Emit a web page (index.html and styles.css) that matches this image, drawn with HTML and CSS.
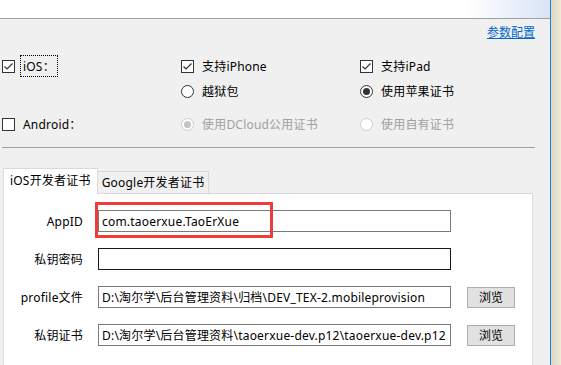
FILE: index.html
```html
<!DOCTYPE html>
<html lang="zh-CN">
<head>
    <meta charset="UTF-8">
    <title>证书配置</title>
    <link rel="stylesheet" href="styles.css">
</head>
<body>

    <div class="screen">
        <div class="window">
            <div class="titlebar"></div>

            <div class="content">
                <div class="link-row">
                    <a class="link" href="#">参数配置</a>
                </div>

                <div class="options">
                    <label class="opt">
                        <svg class="box" viewBox="0 0 13 13"><rect x="0.5" y="0.5" width="12" height="12" fill="#fff" stroke="#333"/><polyline points="2.5,6.5 5,9 10.5,3.5" fill="none" stroke="#333" stroke-width="1.2"/></svg>
                        <span class="focus">iOS：</span>
                    </label>
                    <label class="opt">
                        <svg class="box" viewBox="0 0 13 13"><rect x="0.5" y="0.5" width="12" height="12" fill="#fff" stroke="#333"/><polyline points="2.5,6.5 5,9 10.5,3.5" fill="none" stroke="#333" stroke-width="1.2"/></svg>
                        <span>支持iPhone</span>
                    </label>
                    <label class="opt">
                        <svg class="box" viewBox="0 0 13 13"><rect x="0.5" y="0.5" width="12" height="12" fill="#fff" stroke="#333"/><polyline points="2.5,6.5 5,9 10.5,3.5" fill="none" stroke="#333" stroke-width="1.2"/></svg>
                        <span>支持iPad</span>
                    </label>

                    <span></span>
                    <label class="opt">
                        <svg class="box" viewBox="0 0 13 13"><circle cx="6.5" cy="6.5" r="6" fill="#fff" stroke="#333"/></svg>
                        <span>越狱包</span>
                    </label>
                    <label class="opt">
                        <svg class="box" viewBox="0 0 13 13"><circle cx="6.5" cy="6.5" r="6" fill="#fff" stroke="#333"/><circle cx="6.5" cy="6.5" r="3.5" fill="#333"/></svg>
                        <span>使用苹果证书</span>
                    </label>

                    <label class="opt">
                        <svg class="box" viewBox="0 0 13 13"><rect x="0.5" y="0.5" width="12" height="12" fill="#fff" stroke="#333"/></svg>
                        <span>Android：</span>
                    </label>
                    <label class="opt disabled">
                        <svg class="box" viewBox="0 0 13 13"><circle cx="6.5" cy="6.5" r="6" fill="#fff" stroke="#ccc"/><circle cx="6.5" cy="6.5" r="3.5" fill="#c4c4c4"/></svg>
                        <span>使用DCloud公用证书</span>
                    </label>
                    <label class="opt disabled">
                        <svg class="box" viewBox="0 0 13 13"><circle cx="6.5" cy="6.5" r="6" fill="#fff" stroke="#ccc"/></svg>
                        <span>使用自有证书</span>
                    </label>
                </div>

                <div class="separator"></div>

                <div class="tabs">
                    <div class="tab active">iOS开发者证书</div>
                    <div class="tab">Google开发者证书</div>
                </div>

                <div class="panel">
                    <div class="row">
                        <span class="label">AppID</span>
                        <span class="field">
                            <input class="input" type="text" value="com.taoerxue.TaoErXue">
                            <span class="highlight"></span>
                        </span>
                    </div>
                    <div class="row">
                        <span class="label">私钥密码</span>
                        <span class="field">
                            <input class="input focused" type="password" value="">
                        </span>
                    </div>
                    <div class="row row-file">
                        <span class="label">profile文件</span>
                        <span class="field">
                            <input class="input" type="text" value="D:\淘尔学\后台管理资料\归档\DEV_TEX-2.mobileprovision">
                        </span>
                        <button class="browse">浏览</button>
                    </div>
                    <div class="row">
                        <span class="label">私钥证书</span>
                        <span class="field">
                            <input class="input" type="text" value="D:\淘尔学\后台管理资料\taoerxue-dev.p12\taoerxue-dev.p12">
                        </span>
                        <button class="browse">浏览</button>
                    </div>
                </div>
            </div>
        </div>

        <div class="edge"></div>
        <div class="desk"></div>
    </div>

</body>
</html>
```

FILE: styles.css
```css
body {
    margin: 0;
    font-family: "Noto Sans", "Noto Sans CJK SC", sans-serif;
    font-size: 12px;
    letter-spacing: 0.2px;
    color: #000;
    overflow: hidden;
}

.screen {
    display: flex;
    width: 561px;
    height: 365px;
    overflow: hidden;
}

.window {
    width: 550px;
    background: #f0f0f0;
}

.titlebar {
    height: 18px;
    border-bottom: 1px solid #a0a0a0;
    background: linear-gradient(to right, #ffffff 0%, #ffffff 85%, #d9e3f6 100%);
}

.content {
    padding-top: 6px;
}

.link-row {
    display: flex;
    justify-content: flex-end;
    padding-right: 15px;
    height: 16px;
    line-height: 16px;
}

.link {
    color: #0066cc;
    text-decoration: underline;
    letter-spacing: 0;
}

.options {
    display: grid;
    grid-template-columns: 179px 179px auto;
    grid-template-rows: 25px 33px 20px;
    align-items: start;
    margin-top: 15px;
    padding-left: 2px;
}

.opt {
    display: flex;
    align-items: center;
    height: 20px;
    gap: 8px;
}

.box {
    width: 13px;
    height: 13px;
    flex: none;
}

.focus {
    outline: 1px dotted #000;
    outline-offset: 1px;
    padding: 0 1px;
    margin-left: -1px;
}

.disabled {
    color: #a0a0a0;
}

.separator {
    height: 1px;
    background: #a0a0a0;
    margin: 13px 15px 0 2px;
}

.tabs {
    display: flex;
    align-items: flex-end;
    margin: 21px 0 0 3px;
    height: 24px;
}

.tab {
    height: 21px;
    line-height: 21px;
    padding: 0 4px;
    background: #f0f0f0;
    border: 1px solid #d9d9d9;
    border-bottom: none;
    border-left: none;
}

.tab.active {
    height: 25px;
    line-height: 23px;
    padding: 0 6px;
    background: #ffffff;
    border-left: 1px solid #d9d9d9;
    margin-bottom: -1px;
    position: relative;
    z-index: 1;
}

.panel {
    width: 528px;
    height: 200px;
    margin-left: 3px;
    background: #ffffff;
    border: 1px solid #d9d9d9;
    padding-top: 16px;
}

.row {
    display: flex;
    align-items: center;
    height: 22px;
    margin-bottom: 16px;
}

.row-file {
    margin-top: 1px;
}

.label {
    width: 79px;
    text-align: right;
    margin-right: 15px;
}

.field {
    position: relative;
    display: block;
}

.input {
    box-sizing: border-box;
    width: 353px;
    height: 22px;
    border: 1px solid #7a7a7a;
    padding: 0 3px;
    font-family: "Noto Sans", "Noto Sans CJK SC", sans-serif;
    font-size: 12px;
    letter-spacing: 0.2px;
    color: #000;
    background: #ffffff;
    outline: none;
    display: block;
}

.input.focused {
    border-color: #1a1a1a;
}

.highlight {
    position: absolute;
    left: -3px;
    top: -8px;
    width: 178px;
    height: 36px;
    box-sizing: border-box;
    border: 3px solid #ee3b3b;
}

.browse {
    width: 48px;
    height: 21px;
    margin-left: 16px;
    padding: 0;
    background: #e1e1e1;
    border: 1px solid #adadad;
    font-family: "Noto Sans", "Noto Sans CJK SC", sans-serif;
    font-size: 12px;
    color: #000;
}

.edge {
    width: 1px;
    background: #1883d7;
}

.desk {
    flex: 1;
    background: linear-gradient(to right, #ddd6c3, #efe9d8);
}
```
